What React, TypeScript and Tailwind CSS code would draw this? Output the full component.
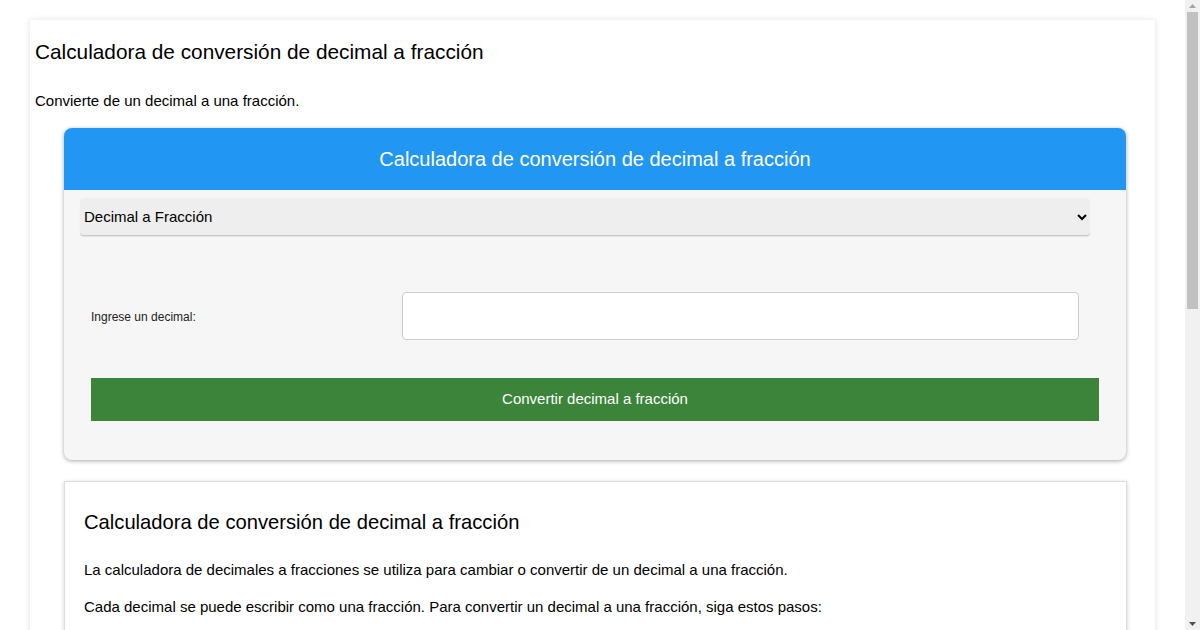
import { useState } from "react";

export default function App() {
  const [mode, setMode] = useState("d2f");
  const [value, setValue] = useState("");

  return (
    <div className="flex h-[630px] overflow-hidden bg-white font-['Liberation_Sans',Arial,sans-serif] text-black">
      <main className="min-w-0 flex-1">
        <div className="mx-[30px] mt-[20px] bg-white px-[5px] pb-10 pt-[20px] shadow-[0_0_6px_rgba(0,0,0,0.12)]">
          <h1 className="h-[23px] text-[20.8px] leading-[23px]">Calculadora de conversión de decimal a fracción</h1>
          <p className="mt-[29px] h-[17px] text-[15px] leading-[17px]">Convierte de un decimal a una fracción.</p>

          <section className="ml-[29px] mr-[24px] mt-[19px] overflow-hidden rounded-lg bg-[#f6f6f6] shadow-[0_1px_4px_rgba(0,0,0,0.35)]">
            <div className="flex h-[62px] items-center justify-center bg-[#2196f3] text-[20px] text-white">
              Calculadora de conversión de decimal a fracción
            </div>
            <div className="pb-[39px] pt-[8px]">
              <div className="ml-[16px] mr-[36px]">
                <select
                  className="h-[38px] w-full rounded border-b border-[#c8c8c8] bg-[#eeeeee] pl-0 pr-2 text-[15px] shadow-[0_1px_1px_rgba(0,0,0,0.08)] outline-none"
                  onChange={(event) => setMode(event.target.value)}
                  value={mode}
                >
                  <option value="d2f">Decimal a Fracción</option>
                  <option value="f2d">Fracción a Decimal</option>
                </select>
              </div>

              <div className="mt-[56px] flex items-center pl-[27px] pr-[47px]">
                <label className="w-[311px] pt-[2px] text-[12px] text-[#222]" htmlFor="decimal">
                  Ingrese un decimal:
                </label>
                <input
                  className="h-[48px] flex-1 rounded border border-[#cccccc] bg-white px-3 text-[15px] outline-none"
                  id="decimal"
                  onChange={(event) => setValue(event.target.value)}
                  value={value}
                />
              </div>

              <div className="mt-[38px] px-[27px]">
                <button className="h-[43px] w-full bg-[#3b8439] text-[15px] text-white" type="button">
                  Convertir decimal a fracción
                </button>
              </div>
            </div>
          </section>

          <section className="ml-[29px] mr-[23px] mt-[21px] border border-[#dddddd] bg-white px-[19px] pb-10 pt-[29px] shadow-[0_1px_4px_rgba(0,0,0,0.2)]">
            <h2 className="h-[23px] text-[20.2px] leading-[23px]">Calculadora de conversión de decimal a fracción</h2>
            <p className="mt-[27px] text-[15px] leading-[17px]">
              La calculadora de decimales a fracciones se utiliza para cambiar o convertir de un decimal a una fracción.
            </p>
            <p className="mt-[20px] text-[15px] leading-[17px]">
              Cada decimal se puede escribir como una fracción. Para convertir un decimal a una fracción, siga estos pasos:
            </p>
          </section>
        </div>
      </main>

      <div className="flex w-[15px] shrink-0 flex-col items-center bg-[#f1f1f1]">
        <div className="flex h-[12px] w-full items-center justify-center">
          <svg width="7" height="4" viewBox="0 0 7 4">
            <path d="M0 4 L3.5 0 L7 4 Z" fill="#a3a3a3" />
          </svg>
        </div>
        <div className="h-[297px] w-[11px] bg-[#c1c1c1]" />
        <div className="flex-1" />
        <div className="flex h-[12px] w-full items-center justify-center">
          <svg width="7" height="4" viewBox="0 0 7 4">
            <path d="M0 0 L3.5 4 L7 0 Z" fill="#505050" />
          </svg>
        </div>
      </div>
    </div>
  );
}
